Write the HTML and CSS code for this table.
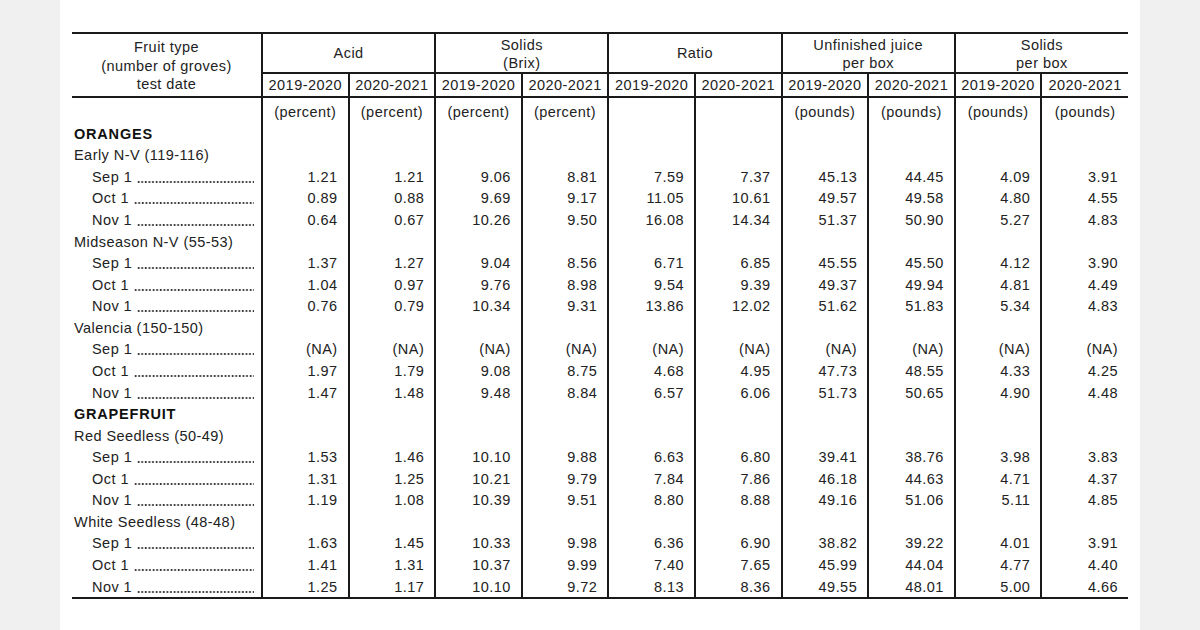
FILE: index.html
```html
<!DOCTYPE html>
<html>
<head>
<meta charset="utf-8">
<link rel="stylesheet" href="styles.css">
</head>
<body>
<div class="panel">
<table class="data">
<colgroup>
<col class="c-label"><col><col><col><col><col><col><col><col><col><col>
</colgroup>
<thead>
<tr class="h1">
<th rowspan="2" class="first">Fruit type<br>(number of groves)<br>test date</th>
<th colspan="2" class="one">Acid</th>
<th colspan="2">Solids<br>(Brix)</th>
<th colspan="2" class="one">Ratio</th>
<th colspan="2">Unfinished juice<br>per box</th>
<th colspan="2">Solids<br>per box</th>
</tr>
<tr class="h2">
<th>2019-2020</th><th>2020-2021</th>
<th>2019-2020</th><th>2020-2021</th>
<th>2019-2020</th><th>2020-2021</th>
<th>2019-2020</th><th>2020-2021</th>
<th>2019-2020</th><th>2020-2021</th>
</tr>
</thead>
<tbody>
<tr class="units">
<td></td>
<td>(percent)</td><td>(percent)</td><td>(percent)</td><td>(percent)</td>
<td></td><td></td>
<td>(pounds)</td><td>(pounds)</td><td>(pounds)</td><td>(pounds)</td>
</tr>
<tr class="cat"><td class="lab"><b>ORANGES</b></td><td></td><td></td><td></td><td></td><td></td><td></td><td></td><td></td><td></td><td></td></tr>
<tr class="grp"><td class="lab">Early N-V (119-116)</td><td></td><td></td><td></td><td></td><td></td><td></td><td></td><td></td><td></td><td></td></tr>
<tr><td class="lab"><div class="lead"><span>Sep 1</span><span class="dots"></span></div></td><td>1.21</td><td>1.21</td><td>9.06</td><td>8.81</td><td>7.59</td><td>7.37</td><td>45.13</td><td>44.45</td><td>4.09</td><td>3.91</td></tr>
<tr><td class="lab"><div class="lead"><span>Oct 1</span><span class="dots"></span></div></td><td>0.89</td><td>0.88</td><td>9.69</td><td>9.17</td><td>11.05</td><td>10.61</td><td>49.57</td><td>49.58</td><td>4.80</td><td>4.55</td></tr>
<tr><td class="lab"><div class="lead"><span>Nov 1</span><span class="dots"></span></div></td><td>0.64</td><td>0.67</td><td>10.26</td><td>9.50</td><td>16.08</td><td>14.34</td><td>51.37</td><td>50.90</td><td>5.27</td><td>4.83</td></tr>
<tr class="grp"><td class="lab">Midseason N-V (55-53)</td><td></td><td></td><td></td><td></td><td></td><td></td><td></td><td></td><td></td><td></td></tr>
<tr><td class="lab"><div class="lead"><span>Sep 1</span><span class="dots"></span></div></td><td>1.37</td><td>1.27</td><td>9.04</td><td>8.56</td><td>6.71</td><td>6.85</td><td>45.55</td><td>45.50</td><td>4.12</td><td>3.90</td></tr>
<tr><td class="lab"><div class="lead"><span>Oct 1</span><span class="dots"></span></div></td><td>1.04</td><td>0.97</td><td>9.76</td><td>8.98</td><td>9.54</td><td>9.39</td><td>49.37</td><td>49.94</td><td>4.81</td><td>4.49</td></tr>
<tr><td class="lab"><div class="lead"><span>Nov 1</span><span class="dots"></span></div></td><td>0.76</td><td>0.79</td><td>10.34</td><td>9.31</td><td>13.86</td><td>12.02</td><td>51.62</td><td>51.83</td><td>5.34</td><td>4.83</td></tr>
<tr class="grp"><td class="lab">Valencia (150-150)</td><td></td><td></td><td></td><td></td><td></td><td></td><td></td><td></td><td></td><td></td></tr>
<tr><td class="lab"><div class="lead"><span>Sep 1</span><span class="dots"></span></div></td><td>(NA)</td><td>(NA)</td><td>(NA)</td><td>(NA)</td><td>(NA)</td><td>(NA)</td><td>(NA)</td><td>(NA)</td><td>(NA)</td><td>(NA)</td></tr>
<tr><td class="lab"><div class="lead"><span>Oct 1</span><span class="dots"></span></div></td><td>1.97</td><td>1.79</td><td>9.08</td><td>8.75</td><td>4.68</td><td>4.95</td><td>47.73</td><td>48.55</td><td>4.33</td><td>4.25</td></tr>
<tr><td class="lab"><div class="lead"><span>Nov 1</span><span class="dots"></span></div></td><td>1.47</td><td>1.48</td><td>9.48</td><td>8.84</td><td>6.57</td><td>6.06</td><td>51.73</td><td>50.65</td><td>4.90</td><td>4.48</td></tr>
<tr class="cat"><td class="lab"><b>GRAPEFRUIT</b></td><td></td><td></td><td></td><td></td><td></td><td></td><td></td><td></td><td></td><td></td></tr>
<tr class="grp"><td class="lab">Red Seedless (50-49)</td><td></td><td></td><td></td><td></td><td></td><td></td><td></td><td></td><td></td><td></td></tr>
<tr><td class="lab"><div class="lead"><span>Sep 1</span><span class="dots"></span></div></td><td>1.53</td><td>1.46</td><td>10.10</td><td>9.88</td><td>6.63</td><td>6.80</td><td>39.41</td><td>38.76</td><td>3.98</td><td>3.83</td></tr>
<tr><td class="lab"><div class="lead"><span>Oct 1</span><span class="dots"></span></div></td><td>1.31</td><td>1.25</td><td>10.21</td><td>9.79</td><td>7.84</td><td>7.86</td><td>46.18</td><td>44.63</td><td>4.71</td><td>4.37</td></tr>
<tr><td class="lab"><div class="lead"><span>Nov 1</span><span class="dots"></span></div></td><td>1.19</td><td>1.08</td><td>10.39</td><td>9.51</td><td>8.80</td><td>8.88</td><td>49.16</td><td>51.06</td><td>5.11</td><td>4.85</td></tr>
<tr class="grp"><td class="lab">White Seedless (48-48)</td><td></td><td></td><td></td><td></td><td></td><td></td><td></td><td></td><td></td><td></td></tr>
<tr><td class="lab"><div class="lead"><span>Sep 1</span><span class="dots"></span></div></td><td>1.63</td><td>1.45</td><td>10.33</td><td>9.98</td><td>6.36</td><td>6.90</td><td>38.82</td><td>39.22</td><td>4.01</td><td>3.91</td></tr>
<tr><td class="lab"><div class="lead"><span>Oct 1</span><span class="dots"></span></div></td><td>1.41</td><td>1.31</td><td>10.37</td><td>9.99</td><td>7.40</td><td>7.65</td><td>45.99</td><td>44.04</td><td>4.77</td><td>4.40</td></tr>
<tr class="last"><td class="lab"><div class="lead"><span>Nov 1</span><span class="dots"></span></div></td><td>1.25</td><td>1.17</td><td>10.10</td><td>9.72</td><td>8.13</td><td>8.36</td><td>49.55</td><td>48.01</td><td>5.00</td><td>4.66</td></tr>
</tbody>
</table>
</div>
</body>
</html>
```

FILE: styles.css
```css
html, body {
  margin: 0;
  padding: 0;
  background: #f0f0f0;
}
.panel {
  width: 1080px;
  height: 630px;
  margin-left: 60px;
  background: #ffffff;
  box-sizing: border-box;
  padding: 32px 12px 0 12px;
}
.data {
  width: 1056px;
  table-layout: fixed;
  border-collapse: collapse;
  font-family: "Liberation Sans", Arial, sans-serif;
  font-size: 14.5px;
  letter-spacing: 0.45px;
  color: #222222;
}
.c-label {
  width: 190px;
}
.data th {
  font-weight: normal;
  padding: 0;
  border: 2px solid #1a1a1a;
  line-height: 18px;
  text-align: center;
  vertical-align: middle;
  color: #222222;
}
.data th.first {
  border-left: none;
  line-height: 18.5px;
  padding-top: 2px;
}
.data th:last-child {
  border-right: none;
}
.h1 th {
  height: 36px;
  padding-top: 2px;
}
.h1 th.one {
  padding-top: 0;
}
.h2 th {
  height: 22px;
  line-height: 20px;
}
.data td {
  padding: 0 10px 0 0;
  border-left: 2px solid #1a1a1a;
  border-right: 2px solid #1a1a1a;
  height: 21.57px;
  line-height: 20px;
  text-align: right;
  white-space: nowrap;
}
.data td:first-child {
  border-left: none;
}
.data td:last-child {
  border-right: none;
}
.units td {
  text-align: center;
  padding: 4px 0 0 0;
  height: 21px;
  vertical-align: top;
}
.last td {
  border-bottom: 2px solid #1a1a1a;
}
.data td.lab {
  text-align: left;
  padding: 0 7px 0 2px;
}
.cat td.lab b {
  font-weight: bold;
  color: #111111;
  letter-spacing: 0.8px;
}
.lead {
  display: flex;
  padding-left: 18px;
}
.lead span {
  flex: none;
}
.lead .dots {
  flex: 1 1 auto;
  margin-left: 5px;
  height: 20px;
  background-image: radial-gradient(circle at 1.5px 15px, #333333 0.75px, rgba(51, 51, 51, 0) 1.25px);
  background-size: 3.6px 20px;
  background-repeat: repeat-x;
}
```
